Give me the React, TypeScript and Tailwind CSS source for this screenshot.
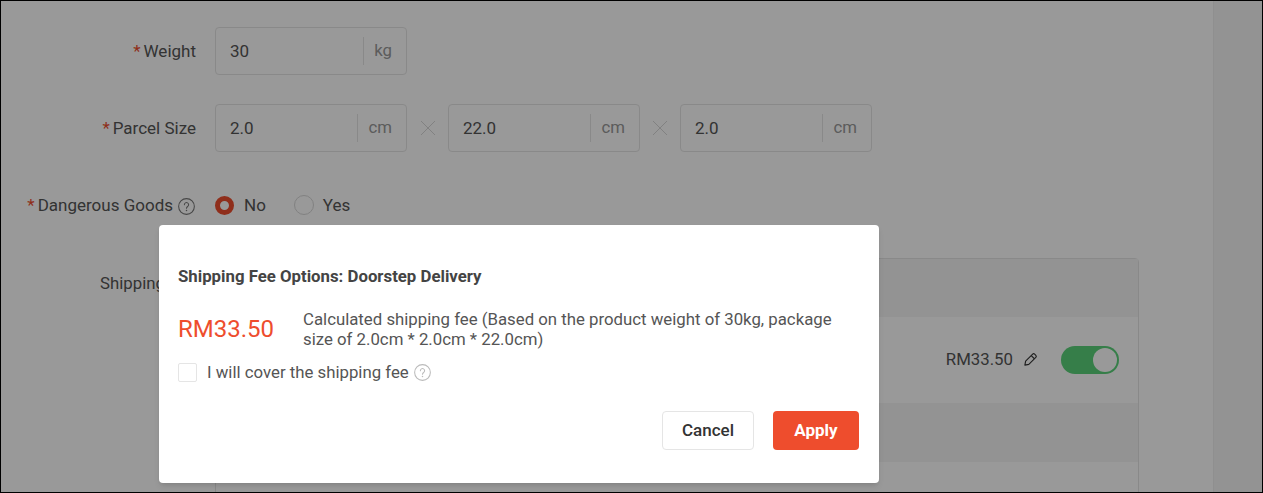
import React from 'react';

const HelpIcon: React.FC<{className?: string}> = ({className}) => (
    <svg viewBox="0 0 16 16" fill="none" className={className}>
        <circle cx="8" cy="8" r="7.4" stroke="currentColor" strokeWidth="1"/>
        <path d="M6 6.3a2 2 0 1 1 3.1 1.7c-.7.45-1.1.8-1.1 1.7" stroke="currentColor" strokeWidth="1" strokeLinecap="round"/>
        <circle cx="8" cy="11.7" r=".7" fill="currentColor"/>
    </svg>
);

const PencilIcon: React.FC = () => (
    <svg viewBox="0 0 16 16" fill="none" className="w-[15px] h-[15px] ml-[9px] mb-[2px] text-[#333]">
        <path d="M2 14l.8-4.2L10.3 2.3a1.5 1.5 0 0 1 2.1 0l1.3 1.3a1.5 1.5 0 0 1 0 2.1L6.2 13.2z" stroke="currentColor" strokeWidth="1.2" strokeLinejoin="round"/>
        <path d="M8.8 3.8l3.4 3.4" stroke="currentColor" strokeWidth="1.2"/>
    </svg>
);

const CrossIcon: React.FC<{className: string}> = ({className}) => (
    <div className={`flex justify-center ${className}`}>
        <svg viewBox="0 0 16 16" className="w-4 h-4 text-[#d8d8d8]" fill="none">
            <path d="M1 1l14 14M15 1L1 15" stroke="currentColor" strokeWidth="1"/>
        </svg>
    </div>
);

const UnitInput: React.FC<{value: string; unit: string}> = ({value, unit}) => (
    <div className="flex items-center w-[192px] h-[48px] border border-[#e5e5e5] rounded-[4px] bg-white pl-[14px] pr-[14px]">
        <span className="flex-1 pt-[2px] text-[17px] text-[#555]">{value}</span>
        <span className="h-[28px] border-l border-[#e5e5e5] pl-[10px] leading-[26px] text-[16.8px] text-[#999]">{unit}</span>
    </div>
);

const Label: React.FC<{required?: boolean; children: React.ReactNode}> = ({required, children}) => (
    <div className="w-[195px] flex items-center justify-end pt-[2px] text-[17px] text-[#555] whitespace-nowrap">
        {required && <span className="text-[#ee4d2d] mr-[3px]">*</span>}
        {children}
    </div>
);

const App: React.FC = () => {
    return (
        <div className="relative w-[1263px] h-[493px] overflow-hidden bg-white border border-black font-['Roboto',sans-serif]">
            {/* Page behind the dialog */}
            <div className="flex h-full">
                <div className="flex-1 pt-[26px]">
                    <div className="flex items-center gap-[19px]">
                        <Label required>Weight</Label>
                        <UnitInput value="30" unit="kg"/>
                    </div>
                    <div className="flex items-center gap-[19px] mt-[29px]">
                        <Label required>Parcel Size</Label>
                        <div className="flex items-center">
                            <UnitInput value="2.0" unit="cm"/>
                            <CrossIcon className="w-[41px]"/>
                            <UnitInput value="22.0" unit="cm"/>
                            <CrossIcon className="w-[40px]"/>
                            <UnitInput value="2.0" unit="cm"/>
                        </div>
                    </div>
                    <div className="flex items-center gap-[19px] mt-[41px] h-[24px]">
                        <Label required>
                            Dangerous Goods
                            <HelpIcon className="w-[17px] h-[17px] ml-[5px] mr-[1px] text-[#777]"/>
                        </Label>
                        <div className="flex items-center text-[17px] text-[#555]">
                            <span className="w-[19px] h-[19px] rounded-full border-[5px] border-[#ee4d2d] bg-white"/>
                            <span className="ml-[10px] pt-[2px]">No</span>
                            <span className="w-[20px] h-[20px] rounded-full border border-[#d8d8d8] bg-white ml-[28px]"/>
                            <span className="ml-[9px] pt-[2px]">Yes</span>
                        </div>
                    </div>
                    <div className="flex gap-[19px] mt-[41px]">
                        <Label>
                            <span className="self-start mt-[11px] text-[16.8px]">Shipping Fee</span>
                        </Label>
                        <div className="w-[924px] border border-[#e5e5e5] rounded-t-[4px]">
                            <div className="h-[58px] bg-[#f6f6f6]"/>
                            <div className="h-[86px] flex items-center justify-end pr-[19px]">
                                <span className="text-[16.8px] text-[#555] mr-[1px]">RM33.50</span>
                                <PencilIcon/>
                                <span className="w-[58px] h-[28px] rounded-full bg-[#5bd27a] ml-[23px] flex items-center justify-end pr-[2px]">
                                    <span className="w-[24px] h-[24px] rounded-full bg-white"/>
                                </span>
                            </div>
                            <div className="h-[59px] bg-[#f6f6f6]"/>
                            <div className="h-[60px]"/>
                        </div>
                    </div>
                </div>
                <div className="w-[49px] bg-[#f5f5f5] border-l border-[#eeeeee]"/>
            </div>

            {/* Overlay and dialog */}
            <div className="absolute inset-0 bg-black/40 pl-[158px] pt-[224px]">
                <div className="w-[720px] h-[258px] bg-white rounded-[4px] shadow-md pt-[41px] pl-[19px] pr-[20px]">
                    <div className="text-[16.8px] leading-[20px] font-bold text-[#444]">Shipping Fee Options: Doorstep Delivery</div>
                    <div className="flex items-center mt-[23px]">
                        <span className="w-[125px] text-[24px] leading-[30px] text-[#ee4d2d]">RM33.50</span>
                        <span className="w-[545px] text-[16.8px] leading-[20px] text-[#555]">
                            Calculated shipping fee (Based on the product weight of 30kg, package size of 2.0cm * 2.0cm * 22.0cm)
                        </span>
                    </div>
                    <div className="flex items-center mt-[11px] text-[16.8px] text-[#555]">
                        <span className="w-[19px] h-[19px] border border-[#e5e5e5] rounded-[2px]"/>
                        <span className="ml-[10px]">I will cover the shipping fee</span>
                        <HelpIcon className="w-[17px] h-[17px] ml-[5px] text-[#bbb]"/>
                    </div>
                    <div className="flex justify-end gap-[19px] mt-[26px] text-[17px]">
                        <button className="w-[92px] h-[39px] border border-[#e5e5e5] rounded-[4px] font-medium text-[#333] bg-white">Cancel</button>
                        <button className="w-[86px] h-[39px] rounded-[4px] font-bold text-white bg-[#ee4d2d]">Apply</button>
                    </div>
                </div>
            </div>
        </div>
    );
};

export default App;
